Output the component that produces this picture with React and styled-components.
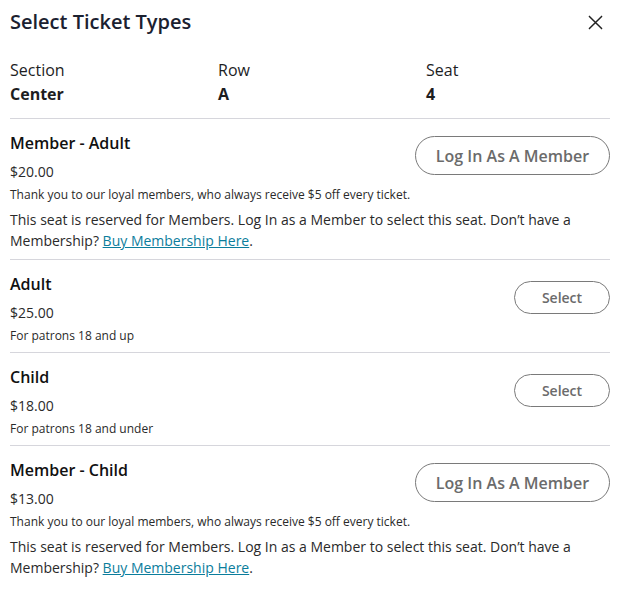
import React from 'react';
import styled, { createGlobalStyle } from 'styled-components';

const FONT = `'Open Sans', 'Liberation Sans', sans-serif`;

const colors = {
  TEXT: '#1d1d1f',
  HEADING: '#1b2130',
  MUTED: '#6b6b6b',
  BORDER: '#d6d6dc',
  BUTTON_BORDER: '#7a7a7a',
  LINK: '#0b7d9c',
};

const GlobalStyle = createGlobalStyle`
  body {
    margin: 0;
    background: #ffffff;
    font-family: ${FONT};
    color: ${colors.TEXT};
  }
  * { box-sizing: border-box; }
`;

const Modal = styled.div`
  width: 627px;
  padding: 8px 17px 0 10px;
`;

const Header = styled.div`
  display: flex;
  justify-content: space-between;
  align-items: center;
  height: 28px;
  margin-bottom: 22px;
`;

const Title = styled.h2`
  margin: 0;
  font-size: 20px;
  line-height: 28px;
  font-weight: 600;
  color: ${colors.HEADING};
`;

const CloseButton = styled.button`
  border: 0;
  background: none;
  padding: 0;
  margin-right: 3px;
  width: 24px;
  height: 24px;
  display: flex;
  align-items: center;
  justify-content: center;
  cursor: pointer;
  color: #222;
`;

const SeatInfo = styled.div`
  display: grid;
  grid-template-columns: repeat(3, 208px);
  padding-bottom: 12px;
  border-bottom: 1px solid ${colors.BORDER};
`;

const InfoLabel = styled.div`
  font-size: 16px;
  line-height: 24px;
`;

const InfoValue = styled.div`
  font-size: 16px;
  line-height: 24px;
  font-weight: 700;
`;

const TicketRow = styled.div`
  padding: 13px 0 8px;
  border-bottom: ${p => (p.last ? 'none' : `1px solid ${colors.BORDER}`)};
`;

const TicketTop = styled.div`
  display: flex;
  justify-content: space-between;
  align-items: flex-start;
`;

const TicketName = styled.div`
  font-size: 16px;
  line-height: 22px;
  font-weight: 600;
  color: #111;
`;

const Price = styled.div`
  margin-top: 8px;
  font-size: 14px;
  line-height: 20px;
  color: #2a2a2a;
`;

const Note = styled.div`
  margin-top: 4px;
  font-size: 12px;
  line-height: 17px;
  color: #2a2a2a;
`;

const Restriction = styled.p`
  margin: 6px 0 0;
  font-size: 14px;
  line-height: 21px;
  color: #2a2a2a;
`;

const Link = styled.a`
  color: ${colors.LINK};
  text-decoration: underline;
  cursor: pointer;
`;

const PillButton = styled.button`
  font-family: ${FONT};
  font-weight: 600;
  color: ${colors.MUTED};
  background: #fff;
  border: 1px solid ${colors.BUTTON_BORDER};
  border-radius: 999px;
  cursor: pointer;
  ${p => p.large
    ? `
      margin-top: 4px;
      width: 195px;
      height: 39px;
      font-size: 16px;
    `
    : `
      margin-top: 8px;
      width: 96px;
      height: 33px;
      font-size: 14px;
    `
  }
`;

const tickets = [
  {
    name: 'Member - Adult',
    price: '$20.00',
    note: 'Thank you to our loyal members, who always receive $5 off every ticket.',
    members: true,
  },
  { name: 'Adult', price: '$25.00', note: 'For patrons 18 and up' },
  { name: 'Child', price: '$18.00', note: 'For patrons 18 and under' },
  {
    name: 'Member - Child',
    price: '$13.00',
    note: 'Thank you to our loyal members, who always receive $5 off every ticket.',
    members: true,
  },
];

const CloseIcon = () => (
  <svg width="15" height="15" viewBox="0 0 16 16" fill="none" stroke="currentColor" strokeWidth="1.6" strokeLinecap="round">
    <path d="M1.5 1.5 L14.5 14.5 M14.5 1.5 L1.5 14.5" />
  </svg>
);

export default function App() {
  return (<>
    <GlobalStyle />
    <Modal>
      <Header>
        <Title>Select Ticket Types</Title>
        <CloseButton aria-label="Close"><CloseIcon /></CloseButton>
      </Header>
      <SeatInfo>
        <div>
          <InfoLabel>Section</InfoLabel>
          <InfoValue>Center</InfoValue>
        </div>
        <div>
          <InfoLabel>Row</InfoLabel>
          <InfoValue>A</InfoValue>
        </div>
        <div>
          <InfoLabel>Seat</InfoLabel>
          <InfoValue>4</InfoValue>
        </div>
      </SeatInfo>
      {tickets.map((t, i) => (
        <TicketRow key={t.name} last={i === tickets.length - 1}>
          <TicketTop>
            <div>
              <TicketName>{t.name}</TicketName>
              <Price>{t.price}</Price>
            </div>
            {t.members
              ? <PillButton large>Log In As A Member</PillButton>
              : <PillButton>Select</PillButton>}
          </TicketTop>
          <Note>{t.note}</Note>
          {t.members && (
            <Restriction>
              This seat is reserved for Members. Log In as a Member to select this seat. Don’t have a
              Membership? <Link>Buy Membership Here</Link>.
            </Restriction>
          )}
        </TicketRow>
      ))}
    </Modal>
  </>);
}
